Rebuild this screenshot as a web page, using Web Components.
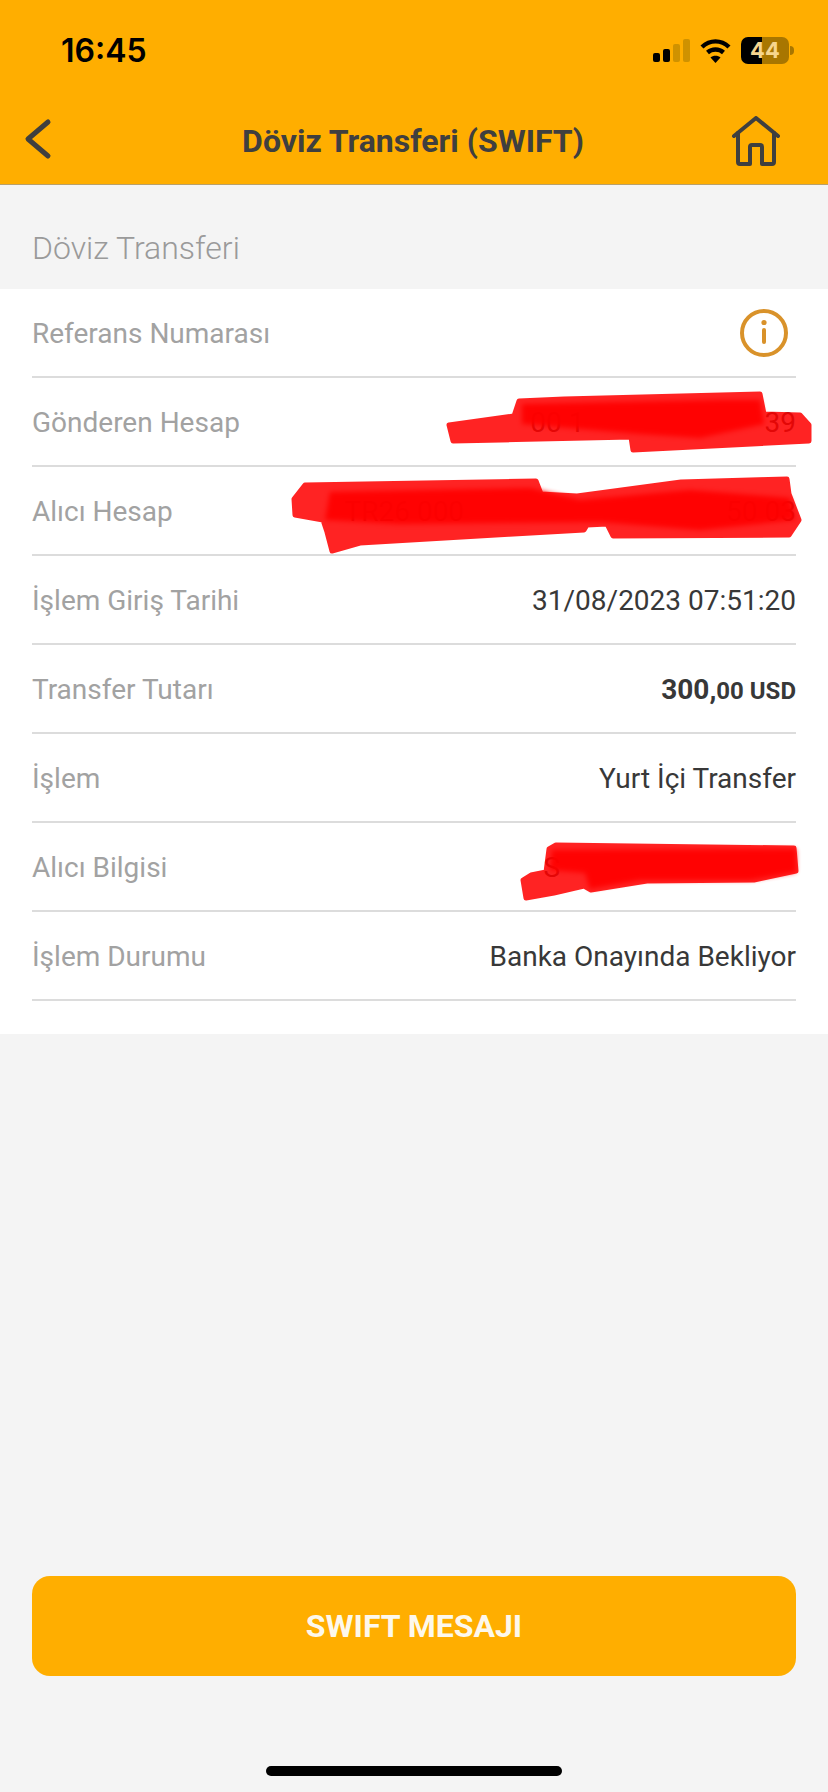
<!DOCTYPE html>
<html lang="tr">
<head>
<meta charset="utf-8">
<title>Döviz Transferi (SWIFT)</title>
<style>
html, body { margin: 0; height: 100%; }
body { background: #f4f4f4; font-family: Roboto, "Liberation Sans", sans-serif; }
transfer-screen { height: 1792px; }
</style>
</head>
<body>
<transfer-screen>
  <status-bar slot="top" time="16:45" battery="44"></status-bar>
  <nav-bar slot="top">Döviz Transferi (SWIFT)</nav-bar>

  <section-title>Döviz Transferi</section-title>

  <detail-list>
    <detail-row label="Referans Numarası"><info-icon></info-icon></detail-row>
    <detail-row label="Gönderen Hesap">
      <span style="margin-right:180px">00 1</span><span>39</span>
      <redact-mark top="378" shape="row2"></redact-mark>
    </detail-row>
    <detail-row label="Alıcı Hesap">
      <span style="margin-right:262px">TR26 000</span><span>50 03</span>
      <redact-mark top="467" shape="row3"></redact-mark>
    </detail-row>
    <detail-row label="İşlem Giriş Tarihi">31/08/2023 07:51:20</detail-row>
    <detail-row label="Transfer Tutarı"><b style="font-weight:700">300,<span style="font-size:24px">00 USD</span></b></detail-row>
    <detail-row label="İşlem">Yurt İçi Transfer</detail-row>
    <detail-row label="Alıcı Bilgisi">
      <span style="margin-right:236px">S</span>
      <redact-mark top="823" shape="row7"></redact-mark>
    </detail-row>
    <detail-row label="İşlem Durumu">Banka Onayında Bekliyor</detail-row>
  </detail-list>

  <action-button slot="bottom">SWIFT MESAJI</action-button>
  <home-indicator slot="bottom"></home-indicator>
</transfer-screen>

<script>
function shadow(el, html) {
  el.attachShadow({ mode: 'open' }).innerHTML = html
}

class TransferScreen extends HTMLElement {
  constructor() {
    super()
    shadow(this, `
      <style>
        :host { display: flex; flex-direction: column; }
        .main { flex: 1; }
      </style>
      <div class="top"><slot name="top"></slot></div>
      <div class="main"><slot></slot></div>
      <div class="bottom"><slot name="bottom"></slot></div>`)
  }
}

class StatusBar extends HTMLElement {
  connectedCallback() {
    shadow(this, `
      <style>
        :host { display: flex; align-items: center; height: 100px; background: #ffae00; padding: 0 34px 0 61px; box-sizing: border-box; }
        .time { font: 600 32px Inter, "Liberation Sans", sans-serif; color: #000; flex: 1; }
        .icons { display: flex; align-items: center; gap: 10px; }
        .signal { display: flex; align-items: flex-end; gap: 2.6px; height: 23px; }
        .signal i { display: block; width: 7.4px; border-radius: 2px; background: #000; }
        .signal i.off { background: #cf9200; }
        svg { display: block; }
        .battery { display: flex; align-items: center; gap: 1px; }
        .cell { width: 48px; height: 27px; border-radius: 7px; background: linear-gradient(90deg, #000 21px, #a87600 21px); font: 700 22px/27px Inter, "Liberation Sans", sans-serif; color: #f6d58e; text-align: center; }
        .nub { width: 4px; height: 9px; border-radius: 0 4px 4px 0; background: #a87600; }
      </style>
      <span class="time">${this.getAttribute('time')}</span>
      <div class="icons">
        <div class="signal">
          <i style="height:9px"></i><i style="height:13px"></i><i class="off" style="height:18px"></i><i class="off" style="height:23px"></i>
        </div>
        <svg width="31" height="25" viewBox="0 0 31 25" fill="none" stroke="#000" stroke-width="4.4">
          <path d="M2 9 C10 1.5 21 1.5 29 9"/>
          <path d="M7.5 14.5 C12 10.5 19 10.5 23.5 14.5"/>
          <path d="M15.5 25 L10.5 19.5 C13 17.3 18 17.3 20.5 19.5 Z" fill="#000" stroke="none"/>
        </svg>
        <div class="battery"><div class="cell">${this.getAttribute('battery')}</div><div class="nub"></div></div>
      </div>`)
  }
}

class NavBar extends HTMLElement {
  constructor() {
    super()
    shadow(this, `
      <style>
        :host { display: flex; align-items: center; height: 85px; background: #ffae00; border-bottom: 1px solid #b9a06a; box-sizing: border-box; padding: 0 46px 0 24px; color: #3f3f3f; }
        .title { flex: 1; text-align: center; font: 700 32px Roboto, sans-serif; padding-left: 42px; position: relative; top: -1px; }
        svg { display: block; flex: none; }
      </style>
      <svg width="30" height="44" viewBox="0 0 30 44" fill="none" stroke="#3f3f3f" stroke-width="5" stroke-linecap="round" stroke-linejoin="round" style="position:relative;top:-2px"><path d="M24 4 L4 21 L24 38"/></svg>
      <div class="title"><slot></slot></div>
      <svg width="52" height="52" viewBox="0 0 52 52" fill="none" stroke="#3f3f3f" stroke-width="4" stroke-linecap="round" stroke-linejoin="round"><path d="M4 20 L26 2 L48 20"/><path d="M8 17 V46 a2 2 0 0 0 2 2 H20 V31 a2 2 0 0 1 2-2 H30 a2 2 0 0 1 2 2 V48 H42 a2 2 0 0 0 2-2 V17"/></svg>`)
  }
}

class SectionTitle extends HTMLElement {
  constructor() {
    super()
    shadow(this, `
      <style>
        :host { display: flex; align-items: center; height: 104px; padding: 21px 32px 0; box-sizing: border-box; font: 300 32px Roboto, sans-serif; color: #9a9a9a; }
      </style>
      <slot></slot>`)
  }
}

class DetailList extends HTMLElement {
  constructor() {
    super()
    shadow(this, `
      <style>
        :host { display: block; background: #fff; padding: 0 32px 33px; }
      </style>
      <slot></slot>`)
  }
}

class DetailRow extends HTMLElement {
  connectedCallback() {
    shadow(this, `
      <style>
        :host { display: flex; align-items: center; justify-content: space-between; height: 89px; box-sizing: border-box; padding-top: 2px; border-bottom: 2px solid #dcdcdc; position: relative; }
        .label { font: 400 28px Roboto, sans-serif; color: #a2a2a2; }
        .value { font: 400 28px Roboto, sans-serif; color: #383838; display: flex; align-items: center; }
      </style>
      <span class="label">${this.getAttribute('label')}</span>
      <span class="value"><slot></slot></span>`)
  }
}

class InfoIcon extends HTMLElement {
  constructor() {
    super()
    shadow(this, `
      <style>:host { display: block; margin-right: 8px; position: relative; top: -1px; } svg { display: block; }</style>
      <svg width="48" height="48" viewBox="0 0 48 48" fill="none" stroke="#d9922a" stroke-width="4" stroke-linecap="round"><circle cx="24" cy="24" r="22"/><path d="M24 21 V33"/><circle cx="24" cy="13.5" r="2.6" fill="#d9922a" stroke="none"/></svg>`)
  }
}

// scribbled-over areas, points are in page coordinates. first path is the
// light edge of the marker, second the darker overlap in the middle
const REDACT = {
  row2: [
    'M449 425 L514 416 L519 401 L564 399 L760 394 L764 414 L800 415 L809 425 L809 441 L633 450 L631 437 L453 441 Z',
    'M522 404 L720 400 L760 400 L764 424 L700 438 L640 434 L522 424 Z'
  ],
  row3: [
    'M305 485 L536 481 L541 494 L577 496 L681 482 L787 479 L789 494 L799 520 L789 535 L613 536 L607 524 L587 525 L584 530 L360 543 L332 551 L327 532 L323 520 L295 515 L294 499 Z',
    'M330 492 L530 488 L580 500 L690 490 L790 498 L795 520 L700 530 L600 522 L400 524 L325 520 Z'
  ],
  row7: [
    'M549 849 L556 845 L794 848 L796 871 L754 880 L647 881 L591 890 L584 886 L554 893 L526 898 L523 880 L531 875 L546 872 Z',
    'M552 850 L796 849 L796 872 L750 880 L640 880 L590 889 L585 873 L550 870 Z'
  ]
}

class RedactMark extends HTMLElement {
  connectedCallback() {
    const top = this.getAttribute('top')
    const parts = REDACT[this.getAttribute('shape')]
    shadow(this, `
      <style>
        :host { position: absolute; left: -32px; top: 0; width: 828px; height: 89px; pointer-events: none; }
        svg { display: block; overflow: visible; }
        .edge { filter: blur(.7px); opacity: .86; }
        .core { filter: blur(2.5px); opacity: .92; }
      </style>
      <svg width="828" height="89" viewBox="0 ${top} 828 89">
        <path class="edge" fill="#ff0000" stroke="#ff0000" stroke-width="5" stroke-linejoin="round" d="${parts[0]}"/>
        <path class="core" fill="#ff0000" d="${parts[1]}"/>
      </svg>`)
  }
}

class ActionButton extends HTMLElement {
  constructor() {
    super()
    shadow(this, `
      <style>
        :host { display: flex; align-items: center; justify-content: center; height: 100px; margin: 0 32px; border-radius: 18px; background: #ffae00; color: #fdf8ec; font: 700 32px Roboto, sans-serif; }
      </style>
      <slot></slot>`)
  }
}

class HomeIndicator extends HTMLElement {
  constructor() {
    super()
    shadow(this, `
      <style>
        :host { display: block; padding: 90px 0 16px; }
        div { width: 296px; height: 10px; margin: auto; border-radius: 5px; background: #000; }
      </style>
      <div></div>`)
  }
}

customElements.define('transfer-screen', TransferScreen)
customElements.define('status-bar', StatusBar)
customElements.define('nav-bar', NavBar)
customElements.define('section-title', SectionTitle)
customElements.define('detail-list', DetailList)
customElements.define('detail-row', DetailRow)
customElements.define('info-icon', InfoIcon)
customElements.define('redact-mark', RedactMark)
customElements.define('action-button', ActionButton)
customElements.define('home-indicator', HomeIndicator)
</script>
</body>
</html>
